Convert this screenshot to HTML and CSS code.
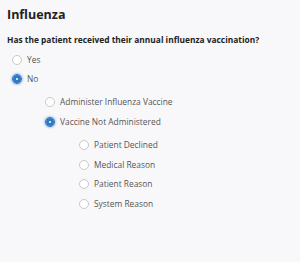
FILE: index.html
```html
<!DOCTYPE html>
<html lang="en">
<head>
    <meta charset="UTF-8">
    <title>Influenza</title>
    <link rel="stylesheet" href="styles.css">
</head>
<body>
    <div class="panel">
        <h2 class="title">Influenza</h2>
        <p class="question">Has the patient received their annual influenza vaccination?</p>

        <div class="options">
            <label class="opt"><span class="radio"></span>Yes</label>
            <label class="opt"><span class="radio checked"></span>No</label>
        </div>

        <!-- when "No" -->
        <div class="options sub">
            <label class="opt"><span class="radio"></span>Administer Influenza Vaccine</label>
            <label class="opt"><span class="radio checked"></span>Vaccine Not Administered</label>
        </div>

        <!-- reasons -->
        <div class="options sub2">
            <label class="opt"><span class="radio"></span>Patient Declined</label>
            <label class="opt"><span class="radio"></span>Medical Reason</label>
            <label class="opt"><span class="radio"></span>Patient Reason</label>
            <label class="opt"><span class="radio"></span>System Reason</label>
        </div>
    </div>
</body>
</html>
```

FILE: styles.css
```css
*{
    margin:0;
    padding:0;
    box-sizing:border-box;
}

body{
    background-color:#f8f8fa;
    font-family:'Open Sans',sans-serif;
    color:#333;
}

.panel{
    padding:6px 7px;
}

.title{
    font-size:12.5px;
    font-weight:700;
    color:#222;
    line-height:18px;
}

.question{
    margin-top:9px;
    font-size:8.4px;
    font-weight:700;
    color:#222;
    line-height:14px;
    white-space:nowrap;
}

.options{
    display:flex;
    flex-direction:column;
    gap:7.5px;
    margin-top:6.5px;
    padding-left:5px;
}
.options.sub{
    margin-top:11px;
    padding-left:38px;
}
.options.sub2{
    margin-top:11.5px;
    padding-left:72px;
}

.opt{
    display:flex;
    align-items:center;
    gap:5px;
    font-size:8.4px;
    color:#555;
    line-height:12px;
}

.radio{
    width:10px;
    height:10px;
    border-radius:50%;
    border:1px solid #c9c9c9;
    background-color:#fff;
    flex-shrink:0;
}
/* checked: blue ring with white dot */
.radio.checked{
    border-color:#2f78c4;
    background-color:#fff;
    box-shadow:inset 0 0 0 3px #2f78c4, 0 0 2px 1px rgba(47,120,196,.35);
}
```
